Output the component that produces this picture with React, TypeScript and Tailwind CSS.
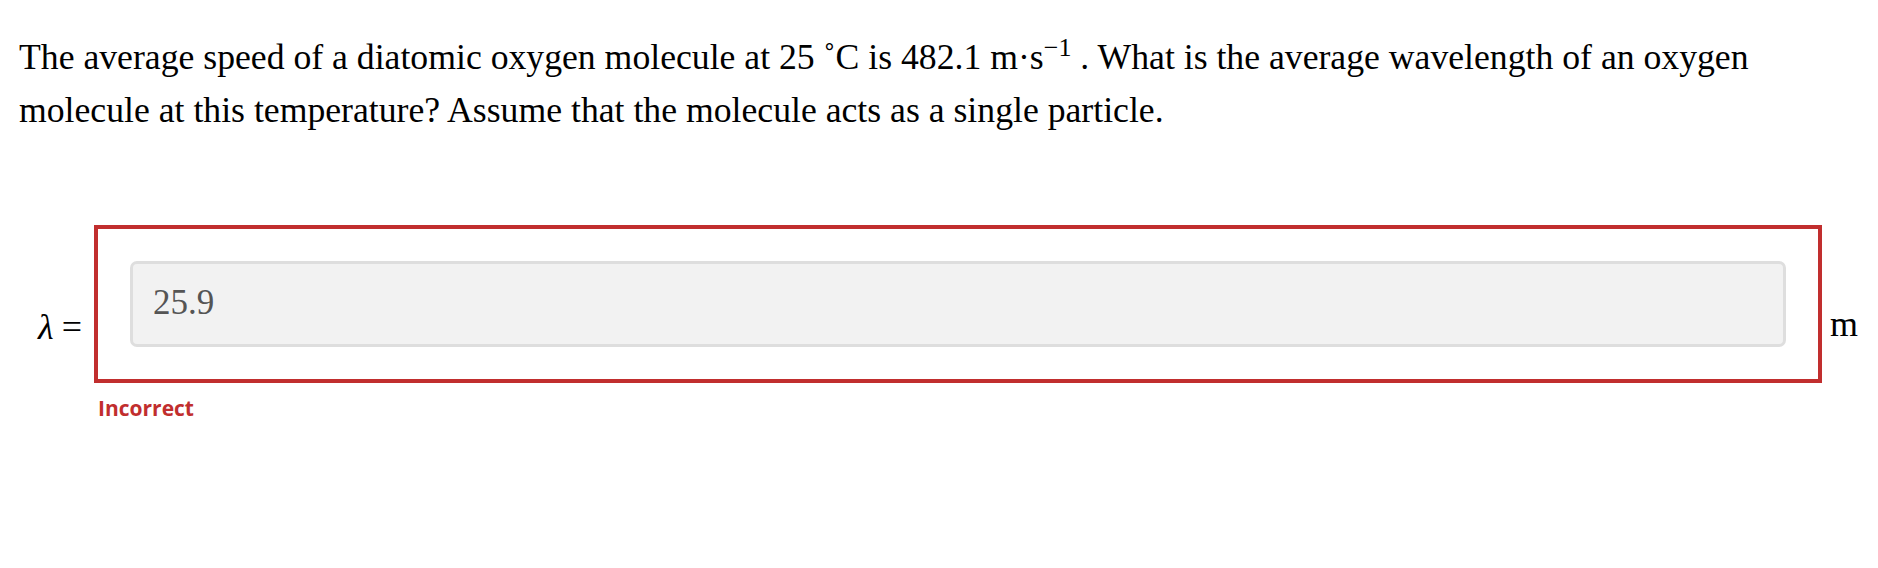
export default function App() {
  return (
    <div className="min-h-[568px] w-[1878px] bg-white px-[19px] pt-[31px] text-black" style={{ fontFamily: '"Liberation Serif", "Times New Roman", serif' }}>
      <p className="text-[35.7px] leading-[53px]">
        The average speed of a diatomic oxygen molecule at 25 ˚C is 482.1 m·s
        <sup className="text-[26px] leading-none">−1</sup> . What is the average wavelength of an oxygen molecule at this temperature? Assume that the molecule acts as a single particle.
      </p>

      <div className="mt-[88px] flex items-start">
        <div className="flex w-[75px] items-center justify-end gap-[8px] pt-[84px] pr-[12px] text-[36px] leading-none">
          <span className="italic">λ</span>
          <span>=</span>
        </div>
        <div>
          <div className="w-[1728px] border-4 border-[#c12e2e] p-[32px]">
            <div className="flex h-[86px] items-center rounded-[7px] border-[3px] border-[#dedede] bg-[#f2f2f2] px-[20px] pb-[2px] text-[35px] text-[#555]">
              25.9
            </div>
          </div>
          <div className="mt-[10px] pl-[4px] text-[21px] font-bold text-[#c12e2e]" style={{ fontFamily: '"Open Sans", sans-serif' }}>
            Incorrect
          </div>
        </div>
        <div className="pt-[81px] pl-[8px] text-[36px] leading-none">m</div>
      </div>
    </div>
  )
}
